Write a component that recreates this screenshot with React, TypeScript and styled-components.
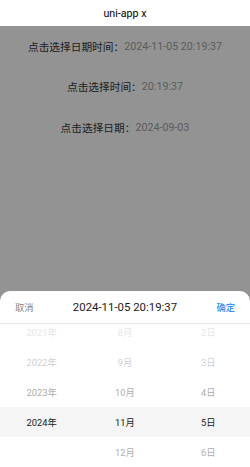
import styled, { createGlobalStyle } from 'styled-components';

const GlobalStyle = createGlobalStyle`
  html, body {
    margin: 0;
    padding: 0;
    background: #f5f5f5;
    font-family: Roboto, "Noto Sans CJK SC", sans-serif;
  }
  * { box-sizing: border-box; }
`;

const years = ['2021年', '2022年', '2023年', '2024年', ''];
const months = ['8月', '9月', '10月', '11月', '12月'];
const days = ['2日', '3日', '4日', '5日', '6日'];
const selected = 3;

const rows = [
  { label: '点击选择日期时间：', value: '2024-11-05 20:19:37' },
  { label: '点击选择时间：', value: '20:19:37' },
  { label: '点击选择日期：', value: '2024-09-03' },
];

// item colour by row, fading out away from the indicator
const tones = ['#e6e6e6', '#d0d0d0', '#adadad', '#1a1a1a', '#adadad'];

const App = () => {
  return (
    <>
      <GlobalStyle />
      <Page>
        <NavBar>uni-app x</NavBar>
        <Content>
          {rows.map((r) => (
            <Row key={r.label}>
              <Label>{r.label}</Label>
              <Value>{r.value}</Value>
            </Row>
          ))}
          <Mask />
        </Content>
        <Popup>
          <PopupHead>
            <Action>取消</Action>
            <Title>2024-11-05 20:19:37</Title>
            <Action $primary>确定</Action>
          </PopupHead>
          <Picker>
            <Indicator />
            <Columns>
              {[years, months, days].map((col, ci) => (
                <Column key={ci}>
                  {col.map((item, i) => (
                    <Item key={i} $color={tones[i]} $active={i === selected}>
                      {item}
                    </Item>
                  ))}
                </Column>
              ))}
            </Columns>
          </Picker>
        </Popup>
      </Page>
    </>
  );
};

export default App;

const Page = styled.div`
  width: 250px;
  height: 467px;
  display: flex;
  flex-direction: column;
  overflow: hidden;
  position: relative;
`;

const NavBar = styled.div`
  height: 26px;
  flex-shrink: 0;
  background: #ffffff;
  display: flex;
  align-items: center;
  justify-content: center;
  font-size: 10.7px;
  color: #000;
  position: relative;
  z-index: 3;
`;

const Content = styled.div`
  flex: 1;
  display: flex;
  flex-direction: column;
`;

const Row = styled.div`
  height: 40.5px;
  display: flex;
  align-items: center;
  justify-content: center;
  font-size: 10.7px;
`;

const Label = styled.span`
  color: #333;
`;

const Value = styled.span`
  color: #999;
`;

const Mask = styled.div`
  position: absolute;
  inset: 0;
  background: rgba(0, 0, 0, 0.4);
  z-index: 1;
`;

const Popup = styled.div`
  position: absolute;
  left: 0;
  right: 0;
  bottom: 0;
  height: 176px;
  background: #ffffff;
  border-radius: 10px 10px 0 0;
  z-index: 2;
  display: flex;
  flex-direction: column;
  overflow: hidden;
`;

const PopupHead = styled.div`
  height: 33px;
  flex-shrink: 0;
  display: flex;
  align-items: center;
  justify-content: space-between;
  padding: 0 15px;
  border-bottom: 1px solid #e8e8e8;
`;

const Action = styled.span<{ $primary?: boolean }>`
  font-size: 9.3px;
  color: ${(p) => (p.$primary ? '#007aff' : '#888888')};
`;

const Title = styled.span`
  font-size: 11.4px;
  color: #1a1a1a;
  font-weight: 400;
`;

const Picker = styled.div`
  flex: 1;
  position: relative;
  overflow: hidden;
`;

const Indicator = styled.div`
  position: absolute;
  left: 0;
  right: 0;
  top: 83px;
  height: 30px;
  background: #f5f5f5;
`;

const Columns = styled.div`
  position: relative;
  display: grid;
  grid-template-columns: repeat(3, 1fr);
  margin-top: -7px;
`;

const Column = styled.div`
  display: flex;
  flex-direction: column;
`;

const Item = styled.div<{ $color: string; $active: boolean }>`
  height: 30px;
  display: flex;
  align-items: center;
  justify-content: center;
  font-size: 9.3px;
  color: ${(p) => p.$color};
`;
